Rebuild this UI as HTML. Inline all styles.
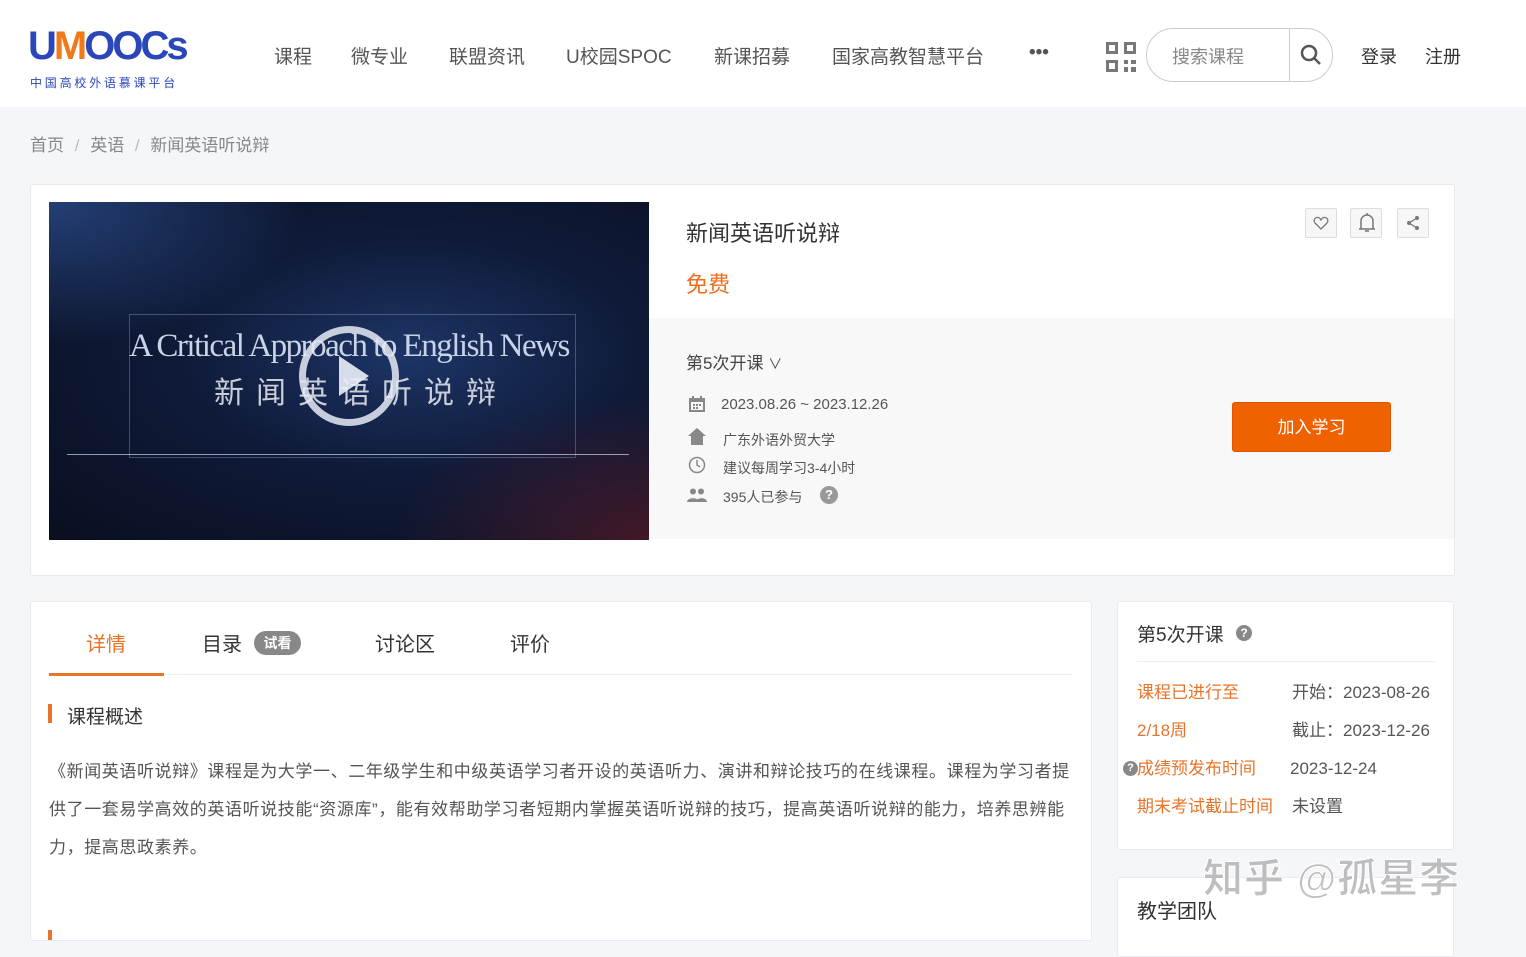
<!DOCTYPE html>
<html><head><meta charset="utf-8"><style>
*{margin:0;padding:0;box-sizing:border-box}
body{width:1526px;height:934px;overflow:hidden;background:#f4f6f9;font-family:"Liberation Sans","Noto Sans CJK SC",sans-serif;color:#333;position:relative}
.abs{position:absolute}
.hdr{left:0;top:0;width:1526px;height:107px;background:#fff}
.nav span{position:absolute;top:42px;font-size:19px;color:#555}
.card{background:#fff;border:1px solid #e8eaee;border-radius:3px}
.ib{width:32px;height:30px;border:1px solid #ddd;border-radius:2px;background:#f7f7f7;top:208px}
.info{font-size:14px;color:#555}
</style></head><body>
<div class="abs hdr">
  <div class="abs" style="left:28px;top:26px;font-size:40px;font-weight:bold;letter-spacing:-3px;line-height:40px;color:#2a46b8">U<span style="color:#f07a1a">M</span>OOCs</div>
  <div class="abs" style="left:30px;top:74px;font-size:12px;letter-spacing:2.8px;color:#2a46b8">中国高校外语慕课平台</div>
  <div class="nav">
    <span style="left:274px">课程</span><span style="left:351px">微专业</span><span style="left:449px">联盟资讯</span><span style="left:566px">U校园SPOC</span><span style="left:714px">新课招募</span><span style="left:832px">国家高教智慧平台</span><span style="left:1029px;font-weight:bold">•••</span>
  </div>
  <svg class="abs" style="left:1106px;top:42px" width="30" height="30" viewBox="0 0 30 30" fill="#777"><path d="M0 0h12v12H0zM3 3v6h6V3zM18 0h12v12H18zM21 3v6h6V3zM0 18h12v12H0zM3 21v6h6v-6zM18 18h4v4h-4zM25 18h5v4h-5zM18 25h4v5h-4zM25 25h5v5h-5z"/></svg>
  <div class="abs" style="left:1146px;top:28px;width:187px;height:54px;border:1px solid #ccc;border-radius:27px"></div>
  <div class="abs" style="left:1289px;top:29px;width:1px;height:52px;background:#ccc"></div>
  <div class="abs" style="left:1172px;top:43px;font-size:18px;color:#888">搜索课程</div>
  <svg class="abs" style="left:1299px;top:43px" width="24" height="24" viewBox="0 0 24 24" fill="none" stroke="#555" stroke-width="2.5"><circle cx="10" cy="10" r="7"/><path d="M15 15l6 6"/></svg>
  <div class="abs" style="left:1361px;top:43px;font-size:18px;color:#333">登录</div>
  <div class="abs" style="left:1425px;top:43px;font-size:18px;color:#333">注册</div>
</div>
<div class="abs" style="left:30px;top:131px;font-size:17px;color:#888">首页 <span style="color:#bbb;margin:0 6px">/</span> 英语 <span style="color:#bbb;margin:0 6px">/</span> 新闻英语听说辩</div>

<div class="abs card" style="left:30px;top:184px;width:1425px;height:392px"></div>
<div class="abs" style="left:49px;top:202px;width:600px;height:338px;background:radial-gradient(ellipse at 60% 45%,#1d3566 0%,#0f1a38 45%,#0a0f20 100%);overflow:hidden">
  <div class="abs" style="left:0;top:0;width:100%;height:100%;background:radial-gradient(ellipse at 0 0,rgba(60,110,200,.5),transparent 30%),radial-gradient(ellipse at 100% 100%,rgba(120,30,40,.5),transparent 30%)"></div>
  <div class="abs" style="left:80px;top:112px;width:447px;height:144px;border:1px solid rgba(160,180,220,.35)"></div>
  <div class="abs" style="left:18px;top:252px;width:562px;height:1px;background:rgba(200,215,240,.7)"></div>
  <div class="abs" style="left:0;top:126px;width:600px;text-align:center;font-family:'Liberation Serif',serif;font-size:33px;letter-spacing:-1.5px;color:#c9d3e8">A Critical Approach to English News</div>
  <div class="abs" style="left:12px;top:166px;width:600px;text-align:center;font-size:30px;letter-spacing:12px;color:#c8cdd8">新闻英语听说辩</div>
  <div class="abs" style="left:250px;top:124px;width:100px;height:100px;border:7px solid rgba(230,235,245,.85);border-radius:50%"></div>
  <svg class="abs" style="left:250px;top:124px" width="100" height="100"><path d="M40 30L70 50L40 70z" fill="rgba(235,240,250,.9)"/></svg>
</div>
<div class="abs" style="left:686px;top:216px;font-size:22px;color:#333">新闻英语听说辩</div>
<div class="abs" style="left:686px;top:267px;font-size:22px;color:#f06d1e">免费</div>
<div class="abs ib" style="left:1305px"></div><div class="abs ib" style="left:1350px"></div><div class="abs ib" style="left:1397px"></div>
<svg class="abs" style="left:1312px;top:215px" width="18" height="16" viewBox="0 0 18 16" fill="none" stroke="#777" stroke-width="1.3"><path d="M9 14L3 8a3.3 3.3 0 015-4.5L9 5l1-1.5a3.3 3.3 0 015 4.5z"/></svg>
<svg class="abs" style="left:1357px;top:212px" width="20" height="22" viewBox="0 0 20 22" fill="none" stroke="#777" stroke-width="1.5"><path d="M4 17V9a6 6 0 0112 0v8zM2 17h16M8 19h4M10 1v2"/></svg>
<svg class="abs" style="left:1405px;top:215px" width="16" height="16" viewBox="0 0 16 16" fill="#777"><circle cx="12" cy="3" r="2"/><circle cx="4" cy="8" r="2"/><circle cx="12" cy="13" r="2"/><path d="M12 3L4 8l8 5" stroke="#777" stroke-width="1.3" fill="none"/></svg>
<div class="abs" style="left:649px;top:318px;width:805px;height:221px;background:#f8f8f8"></div>
<div class="abs" style="left:686px;top:349px;font-size:17px;color:#444">第5次开课 <span style="font-size:14px">&#8744;</span></div>
<svg class="abs" style="left:688px;top:395px" width="18" height="18" viewBox="0 0 18 18" fill="#888"><path d="M1 3h16v14H1zM3 7v8h12V7zM4 1h2v3H4zM12 1h2v3h-2z"/><path d="M5 9h2v2H5zM8 9h2v2H8zM11 9h2v2h-2zM5 12h2v2H5zM8 12h2v2H8z"/></svg>
<div class="abs info" style="left:721px;top:396px;font-size:15px">2023.08.26 ~ 2023.12.26</div>
<svg class="abs" style="left:688px;top:428px" width="18" height="17" viewBox="0 0 18 17" fill="#888"><path d="M9 0L0 8h3v9h12V8h3z"/></svg>
<div class="abs info" style="left:723px;top:430px">广东外语外贸大学</div>
<svg class="abs" style="left:688px;top:456px" width="18" height="18" viewBox="0 0 18 18" fill="none" stroke="#888" stroke-width="1.5"><circle cx="9" cy="9" r="7.5"/><path d="M9 4v5l3 2"/></svg>
<div class="abs info" style="left:723px;top:458px">建议每周学习3-4小时</div>
<svg class="abs" style="left:687px;top:488px" width="20" height="14" viewBox="0 0 20 14" fill="#888"><circle cx="6" cy="3.5" r="3"/><circle cx="14" cy="3.5" r="3"/><path d="M0 14c0-5 12-5 12 0zM9 14c0-5 11-5 11 0z"/></svg>
<div class="abs info" style="left:723px;top:487px">395人已参与</div>
<div class="abs" style="left:820px;top:486px;width:18px;height:18px;border-radius:50%;background:#999;color:#fff;font-size:13px;text-align:center;line-height:18px;font-weight:bold">?</div>
<div class="abs" style="left:1232px;top:402px;width:159px;height:50px;background:#f06100;border-radius:3px;color:#fff;font-size:17px;text-align:center;line-height:50px;border:1px solid #e05500">加入学习</div>

<div class="abs card" style="left:30px;top:601px;width:1062px;height:340px"></div>
<div class="abs" style="left:86px;top:628px;font-size:20px;color:#e8742a">详情</div>
<div class="abs" style="left:49px;top:673px;width:115px;height:3px;background:#e8742a"></div>
<div class="abs" style="left:164px;top:674px;width:908px;height:1px;background:#eee"></div>
<div class="abs" style="left:202px;top:628px;font-size:20px;color:#333">目录</div>
<div class="abs" style="left:254px;top:631px;width:47px;height:24px;border-radius:12px;background:#888;color:#fff;font-size:14px;font-weight:bold;text-align:center;line-height:24px">试看</div>
<div class="abs" style="left:375px;top:628px;font-size:20px;color:#333">讨论区</div>
<div class="abs" style="left:510px;top:628px;font-size:20px;color:#333">评价</div>
<div class="abs" style="left:48px;top:704px;width:4px;height:19px;background:#e8742a"></div>
<div class="abs" style="left:67px;top:702px;font-size:19px;color:#333">课程概述</div>
<div class="abs" style="left:49px;top:753px;width:1025px;font-size:17px;letter-spacing:0.6px;line-height:38px;color:#555">《新闻英语听说辩》课程是为大学一、二年级学生和中级英语学习者开设的英语听力、演讲和辩论技巧的在线课程。课程为学习者提供了一套易学高效的英语听说技能“资源库”，能有效帮助学习者短期内掌握英语听说辩的技巧，提高英语听说辩的能力，培养思辨能力，提高思政素养。</div>
<div class="abs" style="left:48px;top:930px;width:4px;height:10px;background:#e8742a"></div>

<div class="abs card" style="left:1117px;top:601px;width:337px;height:249px"></div>
<div class="abs" style="left:1137px;top:620px;font-size:19px;color:#333">第5次开课</div>
<div class="abs" style="left:1236px;top:625px;width:16px;height:16px;border-radius:50%;background:#888;color:#fff;font-size:12px;text-align:center;line-height:16px;font-weight:bold">?</div>
<div class="abs" style="left:1137px;top:661px;width:298px;height:1px;background:#eee"></div>
<div class="abs" style="left:1137px;top:674px;font-size:17px;line-height:38px;color:#e8742a">课程已进行至<br>2/18周<br>成绩预发布时间<br>期末考试截止时间</div>
<div class="abs" style="left:1123px;top:761px;width:15px;height:15px;border-radius:50%;background:#888;color:#fff;font-size:11px;text-align:center;line-height:15px;font-weight:bold">?</div>
<div class="abs" style="left:1292px;top:674px;font-size:17px;line-height:38px;color:#555">开始：2023-08-26<br>截止：2023-12-26<br><span style="margin-left:-2px">2023-12-24</span><br>未设置</div>
<div class="abs card" style="left:1117px;top:877px;width:337px;height:80px"></div>
<div class="abs" style="left:1137px;top:895px;font-size:20px;color:#333">教学团队</div>
<div class="abs" style="left:1203px;top:846px;font-size:40px;font-weight:bold;color:rgba(170,170,170,.75);-webkit-text-stroke:1px #fff;letter-spacing:1px">知乎 @孤星李</div>
</body></html>
